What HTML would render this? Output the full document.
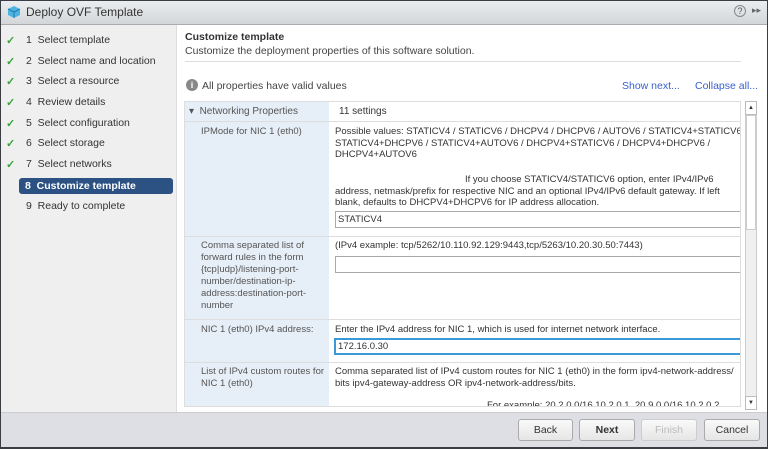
<!DOCTYPE html>
<html><head><style>
*{margin:0;padding:0;box-sizing:border-box}
body{width:768px;height:449px;overflow:hidden;font-family:"Liberation Sans",sans-serif;font-size:10px;color:#333;background:#fff;position:relative}
.abs{position:absolute}
.title{left:0;top:0;width:768px;height:25px;background:linear-gradient(#eceef0,#d4d7da);border-bottom:1px solid #a8acb0;font-size:12px;color:#333}
.left{left:0;top:25px;width:177px;height:387px;background:#efefef;border-right:1px solid #ddd}
.step{position:absolute;left:0;height:16px;font-size:10.5px;color:#333;white-space:nowrap}
.chk{position:absolute;left:6px;color:#3aa23a;font-weight:bold;font-size:11px}
.sel{left:19px;top:178px;width:154px;height:16px;background:#2b5283;border-radius:3px;color:#fff;font-weight:bold;padding-left:6px;line-height:16px;font-size:10.5px}
.lab{background:#e6eef7}
.lbl{color:#555;font-size:9.5px;line-height:12px}
.val{font-size:9.5px;line-height:11.5px;color:#333;white-space:nowrap;overflow:hidden}
.inp{border:1px solid #aaa;height:17px;background:#fff;font-size:9.5px;padding:2px 2px}
.footer{left:0;top:412px;width:768px;height:37px;background:#dedee5;border-top:1px solid #ccc}
.btn{position:absolute;top:419px;height:22px;border:1px solid #aaa;border-radius:3px;background:linear-gradient(#fafafa,#e6e6e6);text-align:center;line-height:20px;font-size:10.5px}
.frame{left:0;top:0;width:768px;height:449px;border:1px solid #3a3d42;border-bottom-width:2px;pointer-events:none}
</style></head><body>
<div class="abs title"><svg class="abs" style="left:7px;top:5px" width="14" height="14"><path d="M7 1 L13 4 L13 10 L7 13 L1 10 L1 4Z" fill="#4fb3e0"/><path d="M7 7 L13 4 M7 7 L1 4 M7 7 V13" stroke="#1e7fb0" stroke-width="1" fill="none"/></svg>
<span class="abs" style="left:26px;top:5px">Deploy OVF Template</span>
<span class="abs" style="left:734px;top:5px;width:12px;height:12px;border:1px solid #888;border-radius:50%;font-size:9px;text-align:center;line-height:10px;color:#555">?</span>
<span class="abs" style="left:752px;top:5px;font-size:9px;color:#666">▸▸</span></div>
<div class="abs left"></div>
<div class="step" style="top:34px"><span class="chk">✓</span><span class="abs" style="left:26px">1&nbsp; Select template</span></div>
<div class="step" style="top:55px"><span class="chk">✓</span><span class="abs" style="left:26px">2&nbsp; Select name and location</span></div>
<div class="step" style="top:75px"><span class="chk">✓</span><span class="abs" style="left:26px">3&nbsp; Select a resource</span></div>
<div class="step" style="top:96px"><span class="chk">✓</span><span class="abs" style="left:26px">4&nbsp; Review details</span></div>
<div class="step" style="top:117px"><span class="chk">✓</span><span class="abs" style="left:26px">5&nbsp; Select configuration</span></div>
<div class="step" style="top:137px"><span class="chk">✓</span><span class="abs" style="left:26px">6&nbsp; Select storage</span></div>
<div class="step" style="top:158px"><span class="chk">✓</span><span class="abs" style="left:26px">7&nbsp; Select networks</span></div>
<div class="abs sel">8&nbsp; Customize template</div>
<div class="step" style="top:200px"><span class="abs" style="left:26px">9&nbsp; Ready to complete</span></div>

<div class="abs" style="left:185px;top:31px;font-weight:bold;font-size:10.5px">Customize template</div>
<div class="abs" style="left:185px;top:45px;font-size:10.5px;color:#444">Customize the deployment properties of this software solution.</div>
<div class="abs" style="left:185px;top:61px;width:556px;height:1px;background:#ddd"></div>
<div class="abs" style="left:186px;top:79px;width:12px;height:12px;border-radius:50%;background:#888;color:#fff;font-size:9px;text-align:center;line-height:12px;font-weight:bold">i</div>
<div class="abs" style="left:202px;top:80px;font-size:10.5px;color:#444">All properties have valid values</div>
<div class="abs" style="left:622px;top:80px;font-size:10.5px;color:#3a5fcd">Show next...</div>
<div class="abs" style="left:695px;top:80px;font-size:10.5px;color:#3a5fcd">Collapse all...</div>

<div class="abs" style="left:184px;top:101px;width:557px;height:306px;border:1px solid #ddd;overflow:hidden">
<div class="abs lab" style="left:0;top:0;width:144px;height:306px"></div>
<div class="abs" style="left:0;top:19px;width:557px;height:1px;background:#ddd"></div>
<div class="abs" style="left:0;top:134px;width:557px;height:1px;background:#ddd"></div>
<div class="abs" style="left:0;top:217px;width:557px;height:1px;background:#ddd"></div>
<div class="abs" style="left:0;top:260px;width:557px;height:1px;background:#ddd"></div>
<div class="abs lbl" style="left:4px;top:4px;font-size:10px">▾&nbsp; Networking Properties</div>
<div class="abs" style="left:154px;top:4px;font-size:10px">11 settings</div>
<div class="abs lbl" style="left:16px;top:24px">IPMode for NIC 1 (eth0)</div>
<div class="abs val" style="left:150px;top:24px;width:407px">Possible values: STATICV4 / STATICV6 / DHCPV4 / DHCPV6 / AUTOV6 / STATICV4+STATICV6 /<br>STATICV4+DHCPV6 / STATICV4+AUTOV6 / DHCPV4+STATICV6 / DHCPV4+DHCPV6 /<br>DHCPV4+AUTOV6</div>
<div class="abs val" style="left:150px;top:72px;width:407px"><span style="padding-left:130px">If you choose STATICV4/STATICV6 option, enter IPv4/IPv6</span><br>address, netmask/prefix for respective NIC and an optional IPv4/IPv6 default gateway. If left<br>blank, defaults to DHCPV4+DHCPV6 for IP address allocation.</div>
<div class="abs inp" style="left:150px;top:109px;width:410px">STATICV4</div>
<div class="abs lbl" style="left:16px;top:138px;width:126px">Comma separated list of forward rules in the form {tcp|udp}/listening-port-number/destination-ip-address:destination-port-number</div>
<div class="abs val" style="left:150px;top:138px">(IPv4 example: tcp/5262/10.110.92.129:9443,tcp/5263/10.20.30.50:7443)</div>
<div class="abs inp" style="left:150px;top:154px;width:410px"></div>
<div class="abs lbl" style="left:16px;top:222px">NIC 1 (eth0) IPv4 address:</div>
<div class="abs val" style="left:150px;top:222px">Enter the IPv4 address for NIC 1, which is used for internet network interface.</div>
<div class="abs inp" style="left:149px;top:236px;width:412px;border:2px solid #3a9ad9;padding:1px 2px">172.16.0.30</div>
<div class="abs lbl" style="left:16px;top:264px;width:128px">List of IPv4 custom routes for NIC 1 (eth0)</div>
<div class="abs val" style="left:150px;top:264px;width:407px">Comma separated list of IPv4 custom routes for NIC 1 (eth0) in the form ipv4-network-address/<br>bits ipv4-gateway-address OR ipv4-network-address/bits.</div>
<div class="abs val" style="left:302px;top:298px">For example: 20.2.0.0/16 10.2.0.1, 20.9.0.0/16 10.2.0.2</div>
</div>
<div class="abs" style="left:745px;top:101px;width:12px;height:309px;background:#f0f0f0;border:1px solid #ccc"></div>
<div class="abs" style="left:745px;top:101px;width:12px;height:14px;border:1px solid #bbb;background:#fff;font-size:6px;text-align:center;line-height:12px">▲</div>
<div class="abs" style="left:746px;top:115px;width:10px;height:115px;background:#fff;border:1px solid #ccc"></div>
<div class="abs" style="left:745px;top:396px;width:12px;height:14px;border:1px solid #bbb;background:#fff;font-size:6px;text-align:center;line-height:12px">▼</div>

<div class="abs footer"></div>
<div class="btn" style="left:518px;width:55px">Back</div>
<div class="btn" style="left:579px;width:56px;font-weight:bold">Next</div>
<div class="btn" style="left:641px;width:56px;color:#bbb;border-color:#ccc">Finish</div>
<div class="btn" style="left:704px;width:56px">Cancel</div>
<div class="abs frame"></div>
</body></html>
